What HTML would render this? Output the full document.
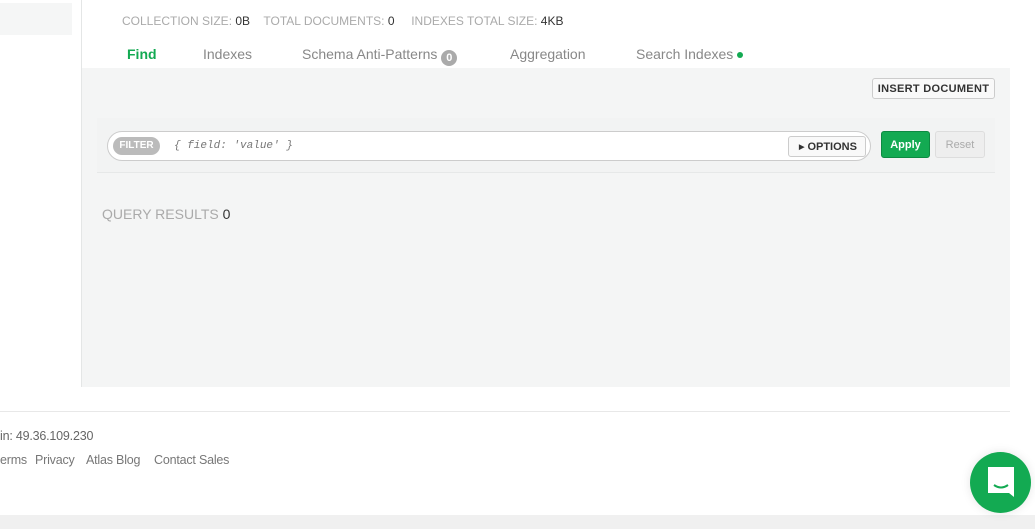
<!DOCTYPE html>
<html><head><style>
*{box-sizing:border-box;margin:0;padding:0}
body{width:1035px;height:529px;overflow:hidden;background:#fff;font-family:"Liberation Sans",sans-serif;position:relative}
.a{position:absolute}
.f{position:absolute;top:453px;font-size:12.5px;color:#777;white-space:nowrap;letter-spacing:-.2px}
</style></head><body>
<div class="a" style="left:0;top:3px;width:72px;height:32px;background:#f5f6f6"></div>
<div class="a" style="left:81px;top:0;width:1px;height:387px;background:#e4e6e6"></div>
<div class="a" style="left:122px;top:14px;font-size:12px;color:#aaa;white-space:nowrap">COLLECTION SIZE: <span style="color:#333">0B</span>&nbsp;&nbsp;&nbsp;&nbsp;TOTAL DOCUMENTS: <span style="color:#333">0</span>&nbsp;&nbsp;&nbsp;&nbsp;&nbsp;INDEXES TOTAL SIZE: <span style="color:#333">4KB</span></div>
<div class="a" style="left:127px;top:46px;font-size:14px;color:#13aa52;font-weight:bold">Find</div>
<div class="a" style="left:203px;top:46px;font-size:14px;color:#888">Indexes</div>
<div class="a" style="left:302px;top:46px;font-size:14px;color:#888;white-space:nowrap">Schema Anti-Patterns <span style="display:inline-block;width:16px;height:16px;border-radius:8px;background:#aaa;color:#fff;font-size:11px;text-align:center;line-height:16px;font-weight:bold;vertical-align:-2px">0</span></div>
<div class="a" style="left:510px;top:46px;font-size:14px;color:#888">Aggregation</div>
<div class="a" style="left:636px;top:46px;font-size:14px;color:#888">Search Indexes <span style="display:inline-block;width:6px;height:6px;border-radius:3px;background:#13aa52;vertical-align:1px"></span></div>
<div class="a" style="left:82px;top:68px;width:928px;height:319px;background:#f4f5f5"></div>
<div class="a" style="left:97px;top:118px;width:898px;height:55px;background:#f2f3f3;border-bottom:1px solid #e6e8e8"></div>
<div class="a" style="left:872px;top:78px;width:123px;height:21px;background:#f9f9f9;border:1px solid #ccc;border-radius:3px;font-size:11px;font-weight:bold;color:#333;text-align:center;line-height:20px;letter-spacing:.3px">INSERT DOCUMENT</div>
<div class="a" style="left:107px;top:131px;width:764px;height:30px;background:#fff;border:1px solid #ccc;border-radius:15px"></div>
<div class="a" style="left:113px;top:137px;width:47px;height:18px;background:#bbb;border-radius:9px;color:#fff;font-size:10px;font-weight:bold;text-align:center;line-height:18px">FILTER</div>
<div class="a" style="left:174px;top:140px;font-family:'Liberation Mono',monospace;font-style:italic;font-size:11px;color:#777">{ field: 'value' }</div>
<div class="a" style="left:788px;top:136px;width:78px;height:21px;background:#f9f9f9;border:1px solid #ccc;border-radius:3px;font-size:11px;font-weight:bold;color:#333;line-height:20px;padding-left:10px"><span style="font-size:7px;vertical-align:1px">▶</span> OPTIONS</div>
<div class="a" style="left:881px;top:131px;width:49px;height:27px;background:#13aa52;border:1px solid #0d8a42;border-radius:3px;color:#fff;font-size:11px;font-weight:bold;text-align:center;line-height:27px">Apply</div>
<div class="a" style="left:935px;top:131px;width:50px;height:27px;background:#eee;border:1px solid #ddd;border-radius:3px;color:#aaa;font-size:11px;text-align:center;line-height:27px">Reset</div>
<div class="a" style="left:102px;top:206px;font-size:14px;color:#aaa">QUERY RESULTS <span style="color:#333">0</span></div>
<div class="a" style="left:0;top:411px;width:1010px;height:1px;background:#e8e8e8"></div>
<div class="a" style="left:0;top:429px;font-size:12.5px;color:#666;letter-spacing:-.2px">in: 49.36.109.230</div>
<div class="f" style="left:0">erms</div>
<div class="f" style="left:35px">Privacy</div>
<div class="f" style="left:86px">Atlas Blog</div>
<div class="f" style="left:154px">Contact Sales</div>
<div class="a" style="left:0;top:515px;width:1035px;height:14px;background:#f0f0f0"></div>
<div class="a" style="left:970px;top:452px;width:61px;height:61px;border-radius:50%;background:#13aa52;box-shadow:0 0 10px rgba(0,0,0,.1)"></div>
<svg class="a" style="left:985px;top:465px" width="32" height="36" viewBox="0 0 32 36"><path d="M3 2h26v30l-5-4H3z" fill="#fff"/><path d="M9 20q7 5 14 0" stroke="#13aa52" stroke-width="2" fill="none"/></svg>
</body></html>
